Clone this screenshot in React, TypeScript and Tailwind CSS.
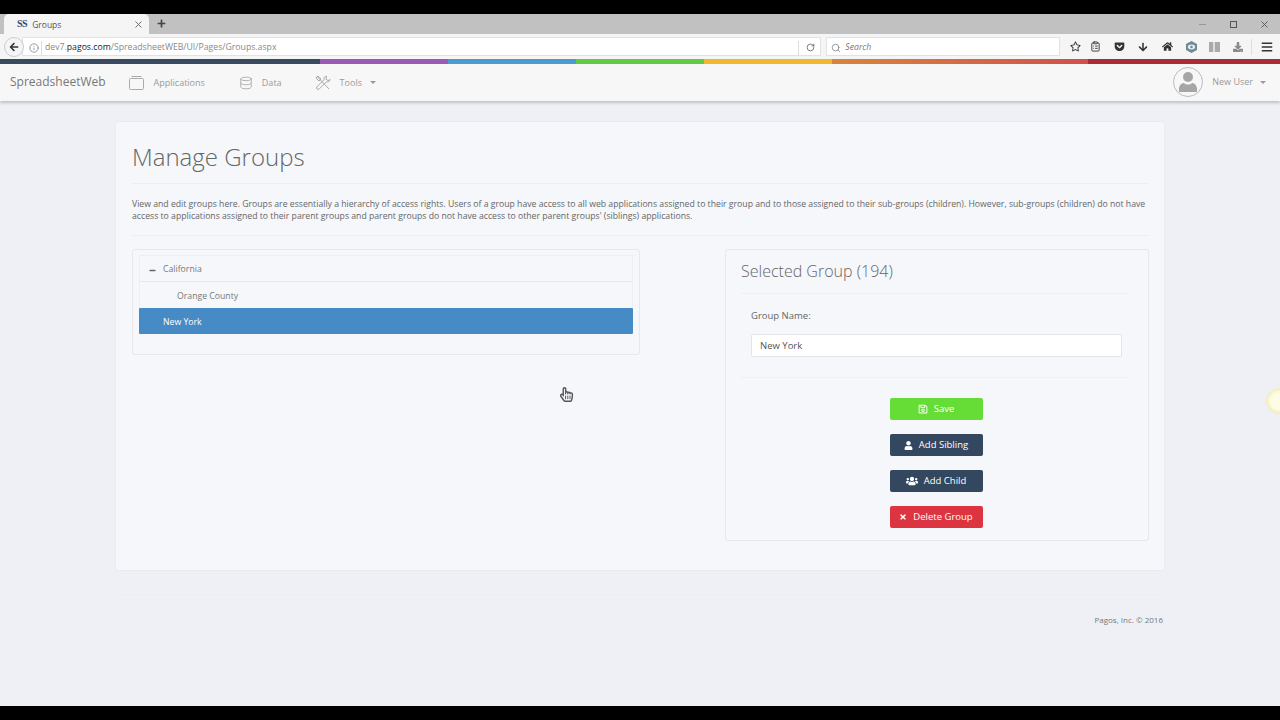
import {
  FaArrowDown,
  FaArrowLeft,
  FaBars,
  FaDownload,
  FaGetPocket,
  FaHome,
  FaMinus,
  FaPlus,
  FaRegHandPointer,
  FaRegSave,
  FaRegStar,
  FaTimes,
  FaUser,
  FaUsers,
} from "react-icons/fa";
import { LuClipboardList, LuDatabase, LuInfo, LuRotateCw, LuSearch, LuX } from "react-icons/lu";

function Browser() {
  return (
    <div className="shrink-0">
      <div className="flex h-[20px] items-end bg-[#c1c1c1] pl-[4px]">
        <div className="flex h-[20px] w-[145px] items-center rounded-t-[5px] bg-[#f5f5f5] pl-[13px] pr-[3px]">
          <span className="font-['Liberation_Serif',serif] text-[10px] font-bold leading-none tracking-[-0.5px] text-[#2f4a73]">SS</span>
          <span className="ml-[5px] pt-[2px] text-[8.5px] text-[#555]">Groups</span>
          <LuX className="ml-auto mr-[2px] text-[#666]" size={11} />
        </div>
        <FaPlus className="mb-[6px] ml-[8px] text-[#444]" size={9} />
        <div className="ml-auto flex h-[20px] items-center pr-[10px] text-[#555]">
          <span className="h-px w-[7px] bg-[#999]" />
          <span className="ml-[24px] h-[7px] w-[7px] border border-[#555]" />
          <LuX className="ml-[22px]" size={11} />
        </div>
      </div>
      <div className="flex h-[25px] items-center bg-[#f5f5f5] pl-[4px] pr-[7px]">
        <div className="z-10 flex h-[20px] w-[20px] items-center justify-center rounded-full border border-[#ccc] bg-[#f5f5f5]">
          <FaArrowLeft className="text-[#333]" size={10} />
        </div>
        <div className="-ml-[2px] flex h-[19px] w-[800px] items-center border border-[#e2e2e2] bg-white pl-[6px] pt-[2px] text-[8.7px]">
          <LuInfo className="text-[#888]" size={10} />
          <span className="ml-[2px] mr-[3px] h-[14px] w-px bg-[#ddd]" />
          <span className="text-[#888]">dev7.</span>
          <span className="text-[#222]">pagos.com</span>
          <span className="text-[#888]">/SpreadsheetWEB/UI/Pages/Groups.aspx</span>
          <span className="ml-auto h-[14px] w-px bg-[#ddd]" />
          <LuRotateCw className="ml-[7px] mr-[5px] text-[#555]" size={9} />
        </div>
        <div className="ml-[5px] flex h-[19px] w-[234px] items-center border border-[#e2e2e2] bg-white pl-[4px] pt-[2px] text-[8.7px] italic text-[#777]">
          <LuSearch className="mr-[4px] text-[#888]" size={10} />
          Search
        </div>
        <FaRegStar className="ml-[10px] text-[#333]" size={11} />
        <LuClipboardList className="ml-[9px] text-[#333]" size={11} />
        <FaGetPocket className="ml-[13px] text-[#333]" size={11} />
        <FaArrowDown className="ml-[13px] text-[#333]" size={10} />
        <FaHome className="ml-[14px] text-[#333]" size={11} />
        <svg className="ml-[13px]" width="11" height="12" viewBox="0 0 11 12">
          <path d="M5.5 0 11 3v6l-5.500 3L0 9V3z" fill="#6f8a92" />
          <ellipse cx="5.5" cy="6" rx="3.6" ry="2.4" fill="#e8eef0" />
          <circle cx="5.5" cy="6" r="1.3" fill="#6f8a92" />
        </svg>
        <div className="ml-[12px] flex h-[10px] w-[11px] justify-center bg-[#aaa]">
          <span className="h-[10px] w-[2px] bg-[#ddd]" />
        </div>
        <FaDownload className="ml-[13px] text-[#8a8a8a]" size={10} />
        <span className="ml-[8px] h-[16px] w-px bg-[#ddd]" />
        <FaBars className="ml-[9px] text-[#333]" size={12} />
      </div>
    </div>
  );
}

const stripes = [
  "w-[320px] bg-[#3a4a60]",
  "w-[128px] bg-[#9b59b6]",
  "w-[128px] bg-[#4a9bd0]",
  "w-[128px] bg-[#62cb46]",
  "w-[128px] bg-[#f3b72f]",
  "w-[256px] bg-linear-to-r from-[#d8843c] to-[#d04f4b]",
  "flex-1 bg-[#ab2b37]",
];

function Caret() {
  return <span className="h-0 w-0 border-x-[3px] border-t-[3px] border-x-transparent border-t-[#999]" />;
}

function Navbar() {
  return (
    <div className="shrink-0">
      <div className="flex h-[5px]">
        {stripes.map((s) => (
          <div key={s} className={s} />
        ))}
      </div>
      <div className="flex h-[37px] items-center bg-[#f7f7f7] pl-[10px] pr-[14px] text-[9px] text-[#9a9a9a] shadow-[0_2px_3px_rgba(0,0,0,0.2)]">
        <span className="-mt-[2px] text-[12px] text-[#777]">SpreadsheetWeb</span>
        <svg className="ml-[23px]" width="15" height="14" viewBox="0 0 15 14" fill="none" stroke="#aaa">
          <rect x="0.5" y="2.5" width="14" height="11" rx="1" />
          <path d="M2.5 .5h10" />
        </svg>
        <span className="ml-[10px]">Applications</span>
        <LuDatabase className="ml-[34px] text-[#aaa]" size={14} strokeWidth={1.5} />
        <span className="ml-[9px]">Data</span>
        <svg className="ml-[33px]" width="16" height="16" viewBox="0 0 16 16" fill="none" stroke="#aaa">
          <path d="M2 1.5 14 14" />
          <path d="M1 3l2-2 3 3-2 2z" />
          <path d="M11.5 1c-2 .3-3 2-2.300 3.600L1.800 12a1.600 1.600 0 0 0 2.200 2.200l7.400-7.400c1.600.7 3.400-.4 3.600-2.300l-2 1.200-2-1.500.4-2.300z" />
        </svg>
        <span className="ml-[9px]">Tools</span>
        <span className="ml-[8px] flex">
          <Caret />
        </span>
        <div className="ml-auto flex items-center">
          <div className="-mt-[1px] flex h-[30px] w-[30px] items-center justify-center rounded-full border border-[#bbb] bg-[#f7f7f7]">
            <svg width="18" height="20" viewBox="0 0 18 20" fill="#a6a6a6">
              <circle cx="9" cy="5" r="5" />
              <path d="M0 20v-3c0-4 3-6 5-6 1 1 2.500 1.500 4 1.500s3-.5 4-1.500c2 0 5 2 5 6v3z" />
            </svg>
          </div>
          <span className="-mt-[1px] ml-[9px]">New User</span>
          <span className="ml-[7px] flex">
            <Caret />
          </span>
        </div>
      </div>
    </div>
  );
}

function GroupTree() {
  return (
    <div className="h-[106px] w-[508px] rounded-[3px] border border-[#e6e8ee] px-[6px] pt-[5px] text-[8.7px] text-[#777]">
      <div className="flex h-[27px] items-center border border-x-[#eceef3] border-b-[#e6e8ee] border-t-[#eceef3] pl-[9px] pt-[3px]">
        <FaMinus className="text-[#666]" size={7} />
        <span className="ml-[7px]">California</span>
      </div>
      <div className="flex h-[26px] items-center border-x border-[#eceef3] pl-[37px] pt-[3px]">Orange County</div>
      <div className="flex h-[26px] items-center rounded-[1px] bg-[#478bc6] pl-[24px] pt-[3px] text-white">New York</div>
    </div>
  );
}

function ActionButton({ color, icon, label }: { color: string; icon: React.ReactNode; label: string }) {
  return (
    <button type="button" className={`flex h-[22px] w-[93px] items-center justify-center gap-[6px] rounded-[2px] text-[9.5px] text-white ${color}`}>
      {icon}
      {label}
    </button>
  );
}

function SelectedGroup() {
  return (
    <div className="h-[292px] w-[424px] rounded-[3px] border border-[#e6e8ee] pl-[15px] pr-[17px] pt-[9px]">
      <h2 className="text-[16px] font-light leading-[24px] text-[#666]">Selected Group (194)</h2>
      <div className="mt-[10px] h-px w-[388px] bg-[#eef0f4]" />
      <div className="ml-[10px] mt-[15px] text-[9.5px] leading-[14px] text-[#666]">Group Name:</div>
      <div className="ml-[10px] mt-[11px] flex h-[23px] w-[371px] items-center rounded-[2px] border border-[#e3e5ea] bg-white pl-[8px] pt-[2px] text-[9.5px] text-[#555]">
        New York
      </div>
      <div className="mt-[20px] h-px w-[388px] bg-[#eef0f4]" />
      <div className="mt-[20px] flex flex-col items-center gap-[14px]">
        <ActionButton color="bg-[#66dc37]" icon={<FaRegSave size={10} />} label="Save" />
        <ActionButton color="bg-[#33475f]" icon={<FaUser size={9} />} label="Add Sibling" />
        <ActionButton color="bg-[#33475f]" icon={<FaUsers size={12} />} label="Add Child" />
        <ActionButton color="bg-[#dc3440]" icon={<FaTimes size={8} />} label="Delete Group" />
      </div>
    </div>
  );
}

export default function App() {
  return (
    <div className="relative flex h-[720px] w-[1280px] flex-col overflow-hidden bg-[#eff0f6] font-['Open_Sans','Noto_Sans',sans-serif]">
      <div className="h-[14px] shrink-0 bg-black" />
      <Browser />
      <Navbar />
      <main className="flex-1 px-[115px] pt-[20px]">
        <div className="h-[450px] w-[1050px] rounded-[3px] border border-[#e9ebf1] bg-[#f5f7fb] pl-[16px] pr-[15px]">
          <h1 className="mt-[19px] text-[24px] font-light leading-[32px] text-[#666]">Manage Groups</h1>
          <div className="mt-[10px] h-px bg-[#eceef3]" />
          <p className="mt-[14px] text-[8.68px] leading-[12px] text-[#666]">
            View and edit groups here. Groups are essentially a hierarchy of access rights. Users of a group have access to all web applications assigned to their group and to those assigned to their sub-groups (children). However, sub-groups (children) do not have access to applications assigned to their parent groups and parent groups do not have access to other parent groups' (siblings) applications.
          </p>
          <div className="mt-[13px] h-px bg-[#eceef3]" />
          <div className="mt-[13px] flex items-start justify-between">
            <GroupTree />
            <SelectedGroup />
          </div>
        </div>
        <div className="mt-[26px] border-t border-[#f2f3f8] pr-[2px] pt-[16px] text-right text-[8px] text-[#777]">
          Pagos, Inc. © 2016
        </div>
      </main>
      <div className="h-[14px] shrink-0 bg-black" />
      <FaRegHandPointer className="absolute left-[559px] top-[387px] text-[#555]" size={15} />
      <div className="absolute left-[1266px] top-[388px] h-[26px] w-[26px] rounded-full border border-[#f3eeb0] bg-[#fdfce6] shadow-[inset_0_0_4px_#e9e39a]" />
    </div>
  );
}
